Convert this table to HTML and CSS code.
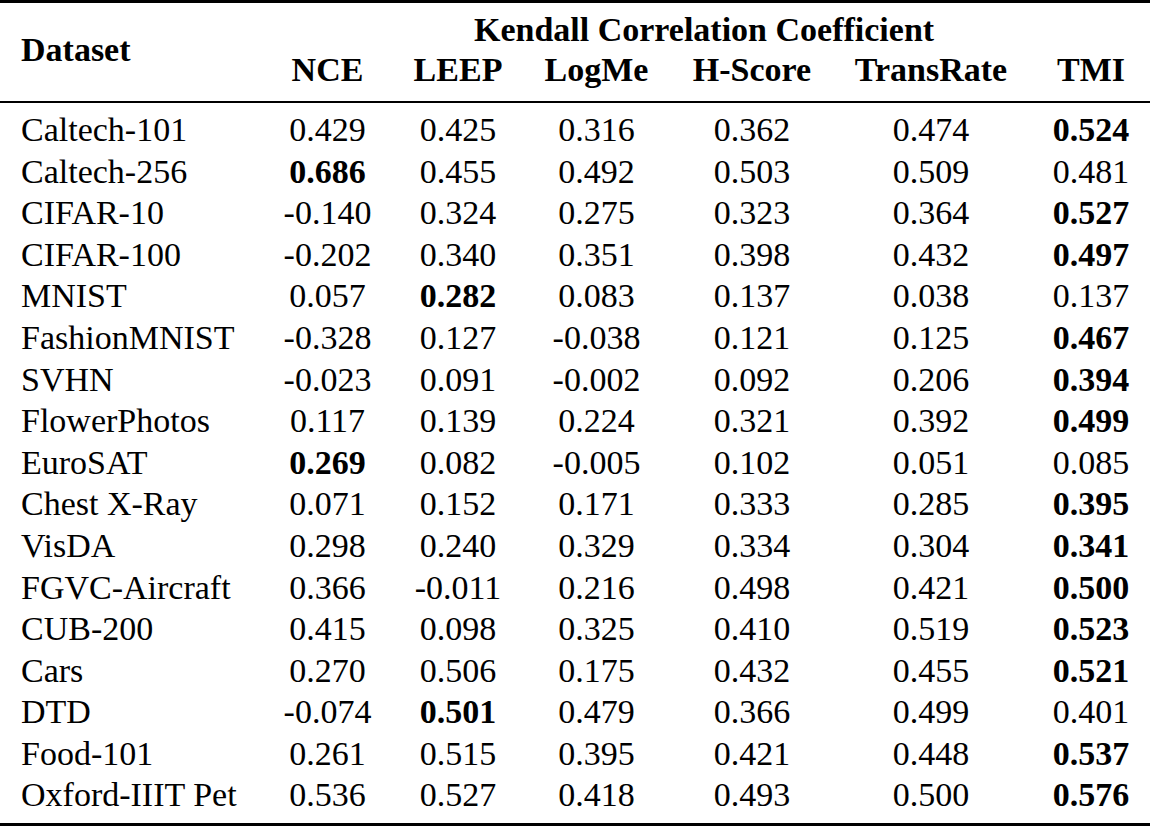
FILE: index.html
```html
<!DOCTYPE html>
<html>
<head>
<meta charset="utf-8">
<link rel="stylesheet" href="styles.css">
</head>
<body>
<table class="results">
  <colgroup>
    <col class="c-ds"><col class="c-nce"><col class="c-leep"><col class="c-logme"><col class="c-hs"><col class="c-tr"><col class="c-tmi">
  </colgroup>
  <thead>
    <tr class="h1">
      <th class="ds" rowspan="2">Dataset</th>
      <th colspan="6">Kendall Correlation Coefficient</th>
    </tr>
    <tr class="h2">
      <th>NCE</th><th>LEEP</th><th>LogMe</th><th>H-Score</th><th>TransRate</th><th>TMI</th>
    </tr>
  </thead>
  <tbody>
    <tr><td class="name">Caltech-101</td><td>0.429</td><td>0.425</td><td>0.316</td><td>0.362</td><td>0.474</td><td class="best">0.524</td></tr>
    <tr><td class="name">Caltech-256</td><td class="best">0.686</td><td>0.455</td><td>0.492</td><td>0.503</td><td>0.509</td><td>0.481</td></tr>
    <tr><td class="name">CIFAR-10</td><td>-0.140</td><td>0.324</td><td>0.275</td><td>0.323</td><td>0.364</td><td class="best">0.527</td></tr>
    <tr><td class="name">CIFAR-100</td><td>-0.202</td><td>0.340</td><td>0.351</td><td>0.398</td><td>0.432</td><td class="best">0.497</td></tr>
    <tr><td class="name">MNIST</td><td>0.057</td><td class="best">0.282</td><td>0.083</td><td>0.137</td><td>0.038</td><td>0.137</td></tr>
    <tr><td class="name">FashionMNIST</td><td>-0.328</td><td>0.127</td><td>-0.038</td><td>0.121</td><td>0.125</td><td class="best">0.467</td></tr>
    <tr><td class="name">SVHN</td><td>-0.023</td><td>0.091</td><td>-0.002</td><td>0.092</td><td>0.206</td><td class="best">0.394</td></tr>
    <tr><td class="name">FlowerPhotos</td><td>0.117</td><td>0.139</td><td>0.224</td><td>0.321</td><td>0.392</td><td class="best">0.499</td></tr>
    <tr><td class="name">EuroSAT</td><td class="best">0.269</td><td>0.082</td><td>-0.005</td><td>0.102</td><td>0.051</td><td>0.085</td></tr>
    <tr><td class="name">Chest X-Ray</td><td>0.071</td><td>0.152</td><td>0.171</td><td>0.333</td><td>0.285</td><td class="best">0.395</td></tr>
    <tr><td class="name">VisDA</td><td>0.298</td><td>0.240</td><td>0.329</td><td>0.334</td><td>0.304</td><td class="best">0.341</td></tr>
    <tr><td class="name">FGVC-Aircraft</td><td>0.366</td><td>-0.011</td><td>0.216</td><td>0.498</td><td>0.421</td><td class="best">0.500</td></tr>
    <tr><td class="name">CUB-200</td><td>0.415</td><td>0.098</td><td>0.325</td><td>0.410</td><td>0.519</td><td class="best">0.523</td></tr>
    <tr><td class="name">Cars</td><td>0.270</td><td>0.506</td><td>0.175</td><td>0.432</td><td>0.455</td><td class="best">0.521</td></tr>
    <tr><td class="name">DTD</td><td>-0.074</td><td class="best">0.501</td><td>0.479</td><td>0.366</td><td>0.499</td><td>0.401</td></tr>
    <tr><td class="name">Food-101</td><td>0.261</td><td>0.515</td><td>0.395</td><td>0.421</td><td>0.448</td><td class="best">0.537</td></tr>
    <tr><td class="name">Oxford-IIIT Pet</td><td>0.536</td><td>0.527</td><td>0.418</td><td>0.493</td><td>0.500</td><td class="best">0.576</td></tr>
  </tbody>
</table>
</body>
</html>
```
FILE: styles.css
```css
html, body {
  margin: 0;
  padding: 0;
  background: #fff;
}

.results {
  width: 1150px;
  table-layout: fixed;
  border-collapse: separate;
  border-spacing: 0;
  border-top: 3px solid #000;
  border-bottom: 3px solid #000;
  font-family: "Liberation Serif", "Times New Roman", serif;
  font-size: 34px;
  color: #000;
}

.c-ds { width: 258px; }
.c-nce { width: 139px; }
.c-leep { width: 122px; }
.c-logme { width: 155px; }
.c-hs { width: 156px; }
.c-tr { width: 202px; }
.c-tmi { width: 118px; }

.results th,
.results td {
  padding: 0;
  text-align: center;
  white-space: nowrap;
}

.results th {
  font-weight: bold;
  line-height: 40px;
}

.results td {
  line-height: 41.6px;
  font-weight: normal;
}

.h1 th {
  padding-top: 7.2px;
}

.h2 th {
  padding-bottom: 10.8px;
  border-bottom: 2px solid #000;
}

.results th.ds {
  text-align: left;
  padding-left: 21px;
  padding-top: 7.2px;
  padding-bottom: 10.8px;
  vertical-align: middle;
  border-bottom: 2px solid #000;
}

.results td.name {
  text-align: left;
  padding-left: 21px;
}

.results td.best {
  font-weight: bold;
}

tbody tr:first-child td {
  padding-top: 6px;
}

tbody tr:last-child td {
  padding-bottom: 6.8px;
}
```
